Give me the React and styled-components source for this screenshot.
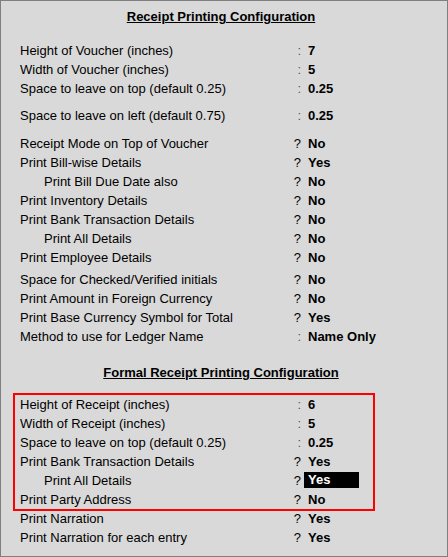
import React from "react";
import styled, { createGlobalStyle } from "styled-components";

const Global = createGlobalStyle`
  html, body { margin: 0; padding: 0; background: #d9d9d9; }
  body { font-family: "Liberation Sans", Arial, sans-serif; font-size: 13px; color: #000; }
`;

const Page = styled.div`
  box-sizing: border-box;
  width: 448px;
  height: 557px;
  border: 1px solid #7f7f7f;
  background: #d9d9d9;
  padding-top: 6px;
  overflow: hidden;
`;

const Title = styled.div`
  height: 19px;
  line-height: 19px;
  text-align: center;
  padding-right: 6px;
  font-weight: bold;
  text-decoration: underline;
  margin-top: ${(p) => p.$mt || 0}px;
  margin-bottom: ${(p) => p.$mb || 0}px;
`;

const Group = styled.div`
  margin-top: ${(p) => p.$mt || 0}px;
`;

const Boxed = styled.div`
  margin-left: 14px;
  width: 358px;
  outline: 2px solid #ff0000;
`;

const Row = styled.div`
  display: grid;
  grid-template-columns: 268px 10px 55px;
  column-gap: 3px;
  height: 19px;
  line-height: 19px;
  padding-left: ${(p) => (p.$inBox ? 5 : 19)}px;
`;

const Label = styled.div`
  white-space: nowrap;
  padding-left: ${(p) => (p.$indent ? 24 : 0)}px;
`;

const Sep = styled.div`
  text-align: right;
  color: ${(p) => (p.$q ? "#000" : "#555")};
`;

const Value = styled.div`
  font-weight: bold;
  white-space: nowrap;
  padding-left: 4px;
  margin: ${(p) => (p.$hl ? "1px 0" : "0")};
  height: ${(p) => (p.$hl ? "16px" : "19px")};
  line-height: ${(p) => (p.$hl ? "16px" : "19px")};
  background: ${(p) => (p.$hl ? "#000" : "transparent")};
  color: ${(p) => (p.$hl ? "#fff" : "#000")};
`;

const Item = ({ label, q, value, indent, hl, inBox }) => (
  <Row $inBox={inBox}>
    <Label $indent={indent}>{label}</Label>
    <Sep $q={q}>{q ? "?" : ":"}</Sep>
    <Value $hl={hl}>{value}</Value>
  </Row>
);

export default function App() {
  return (
    <>
      <Global />
      <Page>
        <Title $mb={15}>Receipt Printing Configuration</Title>
        <Group>
          <Item label="Height of Voucher (inches)" value="7" />
          <Item label="Width of Voucher (inches)" value="5" />
          <Item label="Space to leave on top (default 0.25)" value="0.25" />
        </Group>
        <Group $mt={8}>
          <Item label="Space to leave on left (default 0.75)" value="0.25" />
        </Group>
        <Group $mt={9}>
          <Item label="Receipt Mode on Top of Voucher" q value="No" />
          <Item label="Print Bill-wise Details" q value="Yes" />
          <Item label="Print Bill Due Date also" indent q value="No" />
          <Item label="Print Inventory Details" q value="No" />
          <Item label="Print Bank Transaction Details" q value="No" />
          <Item label="Print All Details" indent q value="No" />
          <Item label="Print Employee Details" q value="No" />
        </Group>
        <Group $mt={3}>
          <Item label="Space for Checked/Verified initials" q value="No" />
          <Item label="Print Amount in Foreign Currency" q value="No" />
          <Item label="Print Base Currency Symbol for Total" q value="Yes" />
          <Item label="Method to use for Ledger Name" value="Name Only" />
        </Group>
        <Title $mt={17} $mb={13}>Formal Receipt Printing Configuration</Title>
        <Boxed>
          <Item inBox label="Height of Receipt (inches)" value="6" />
          <Item inBox label="Width of Receipt (inches)" value="5" />
          <Item inBox label="Space to leave on top (default 0.25)" value="0.25" />
          <Item inBox label="Print Bank Transaction Details" q value="Yes" />
          <Item inBox label="Print All Details" indent q value="Yes" hl />
          <Item inBox label="Print Party Address" q value="No" />
        </Boxed>
        <Group>
          <Item label="Print Narration" q value="Yes" />
          <Item label="Print Narration for each entry" q value="Yes" />
        </Group>
      </Page>
    </>
  );
}
